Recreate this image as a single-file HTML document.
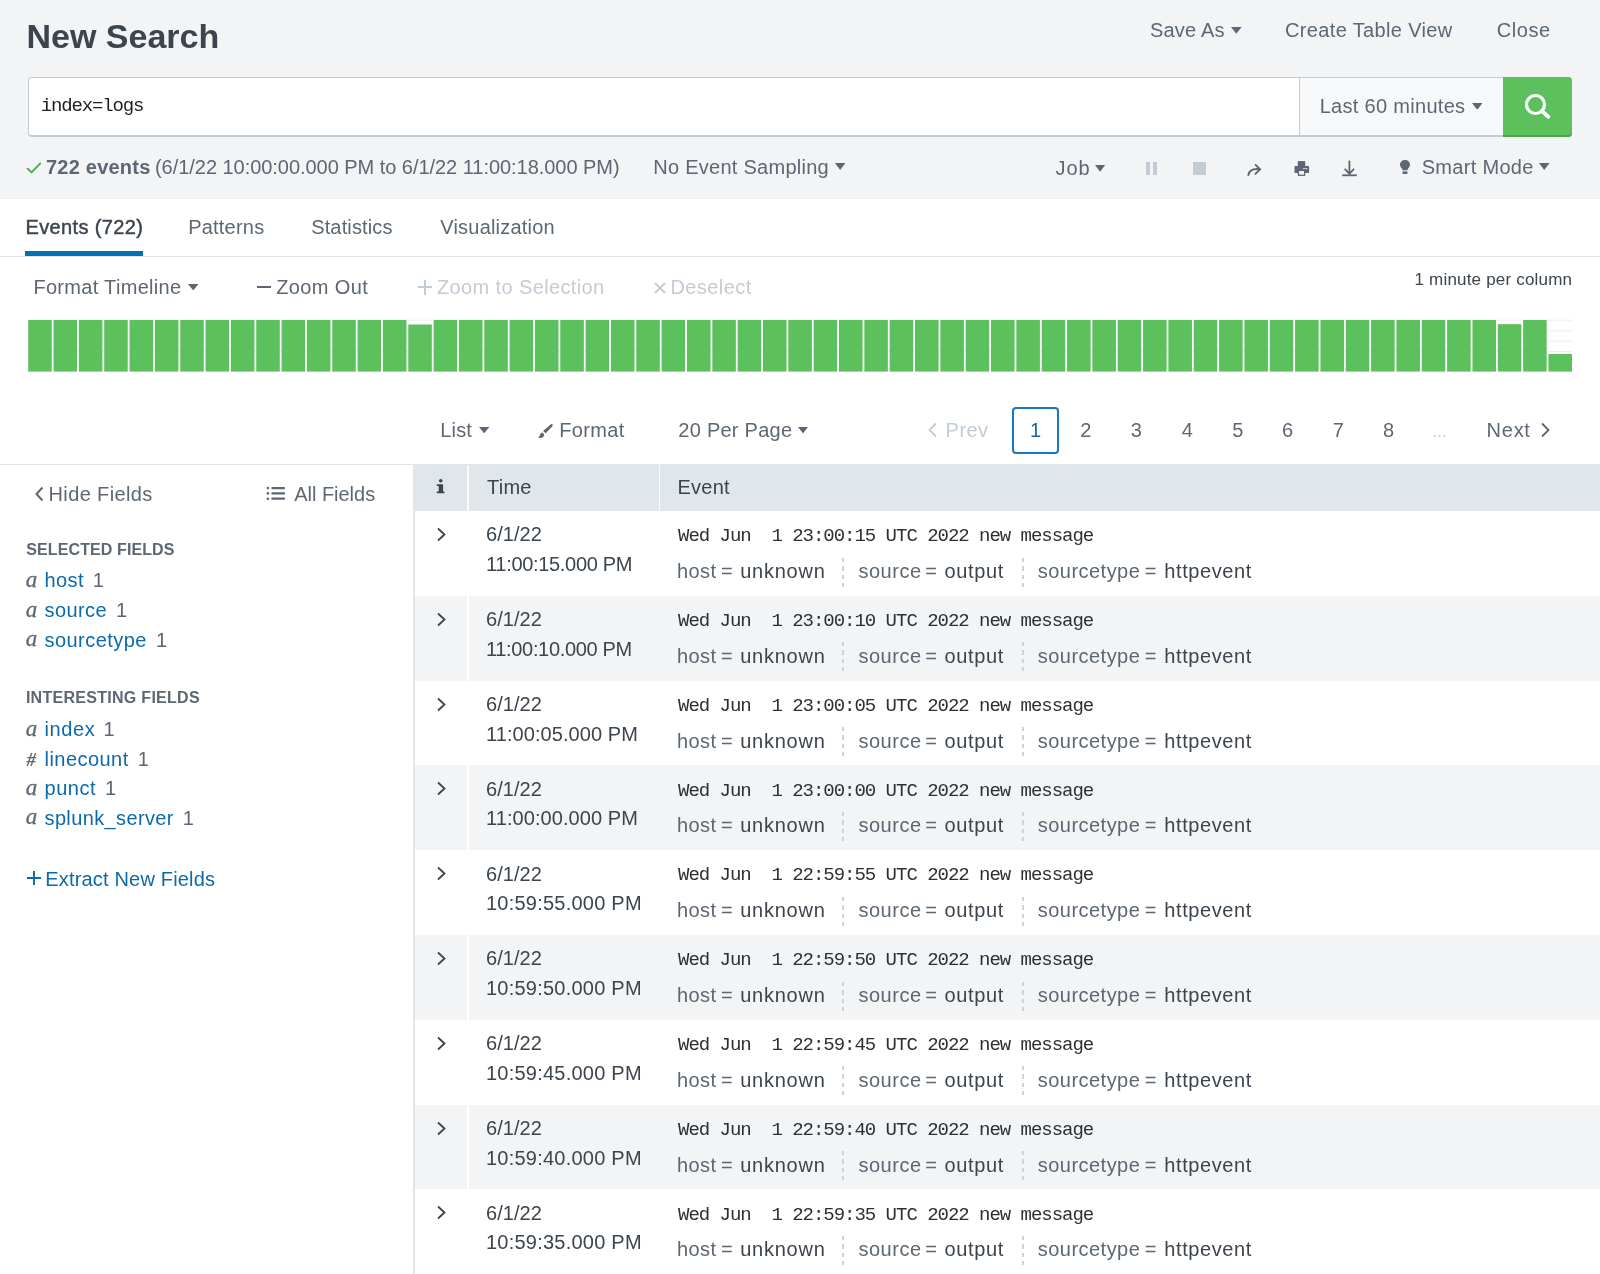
<!DOCTYPE html>
<html><head><meta charset="utf-8"><title>New Search</title>
<style>
html,body{margin:0;padding:0;}
body{width:1600px;height:1274px;position:relative;overflow:hidden;background:#fff;font-family:'Liberation Sans', sans-serif;}
.t{position:absolute;white-space:pre;}
#w{position:absolute;left:0;top:0;width:1600px;height:1274px;will-change:transform;}
.r{position:absolute;display:block;}
</style></head><body>
<div id="w">
<div class="r" style="left:0.00px;top:0.00px;width:1600.00px;height:198.50px;background:#f2f4f5;"></div>
<div class="r" style="left:0.00px;top:197.60px;width:1600.00px;height:1.00px;background:#eceef1;"></div>
<div class="t" style="left:26.50px;top:19.21px;font-size:34px;line-height:34px;color:#3c444d;font-weight:700;font-family:'Liberation Sans', sans-serif;">New Search</div>
<div class="t" style="left:1150.00px;top:20.37px;font-size:20px;line-height:20px;color:#5c6773;font-weight:400;font-family:'Liberation Sans', sans-serif;letter-spacing:0.200px;">Save As</div>
<svg class="r" style="left:1231.00px;top:27.20px" width="10.60" height="6.70" viewBox="0 0 10.60 6.70"><path d="M0 0H10.60L5.30 6.70Z" fill="#5c6773"/></svg>
<div class="t" style="left:1285.00px;top:20.37px;font-size:20px;line-height:20px;color:#5c6773;font-weight:400;font-family:'Liberation Sans', sans-serif;letter-spacing:0.350px;">Create Table View</div>
<div class="t" style="left:1496.80px;top:20.37px;font-size:20px;line-height:20px;color:#5c6773;font-weight:400;font-family:'Liberation Sans', sans-serif;letter-spacing:0.550px;">Close</div>
<div class="r" style="left:27.5px;top:77px;width:1544.5px;height:59.5px;border-radius:4px;background:#fff;box-sizing:border-box;border:1px solid #c3cbd4;border-bottom:2px solid #c3cbd4;"></div>
<div class="t" style="left:40.70px;top:97.14px;font-size:19px;line-height:19px;color:#1b1f23;font-weight:400;font-family:'Liberation Mono', monospace;letter-spacing:-1.133px;">index=logs</div>
<div class="r" style="left:1299.00px;top:77.00px;width:204.30px;height:59.50px;background:#f7f8fa;border-left:1px solid #c3cbd4;border-top:1px solid #c3cbd4;border-bottom:2px solid #c3cbd4;box-sizing:border-box;"></div>
<div class="t" style="left:1319.70px;top:96.07px;font-size:20px;line-height:20px;color:#5c6773;font-weight:400;font-family:'Liberation Sans', sans-serif;letter-spacing:0.300px;">Last 60 minutes</div>
<svg class="r" style="left:1472.20px;top:102.60px" width="10.50" height="6.90" viewBox="0 0 10.50 6.90"><path d="M0 0H10.50L5.25 6.90Z" fill="#5c6773"/></svg>
<div class="r" style="left:1503.3px;top:77px;width:68.7px;height:59.5px;background:#5cc05c;border-radius:0 4px 4px 0;box-shadow:inset 0 -2px 0 #4aa64a;"></div>
<svg class="r" style="left:1523px;top:92px" width="30" height="30" viewBox="0 0 30 30"><circle cx="12.5" cy="12.5" r="9" fill="none" stroke="#fff" stroke-width="3.2"/><path d="M19 19L25.3 24.8" stroke="#fff" stroke-width="3.9" stroke-linecap="round"/></svg>
<svg class="r" style="left:26px;top:160px" width="16" height="16" viewBox="0 0 16 16"><path d="M1.6 8.6L5.6 12.3L14.3 3.4" fill="none" stroke="#47a447" stroke-width="1.8" stroke-linecap="round"/></svg>
<div class="t" style="left:46.00px;top:156.67px;font-size:20px;line-height:20px;color:#5c6773;font-weight:700;font-family:'Liberation Sans', sans-serif;letter-spacing:0.222px;">722 events</div>
<div class="t" style="left:155.00px;top:156.67px;font-size:20px;line-height:20px;color:#5c6773;font-weight:400;font-family:'Liberation Sans', sans-serif;letter-spacing:-0.041px;">(6/1/22 10:00:00.000 PM to 6/1/22 11:00:18.000 PM)</div>
<div class="t" style="left:653.30px;top:156.67px;font-size:20px;line-height:20px;color:#5c6773;font-weight:400;font-family:'Liberation Sans', sans-serif;letter-spacing:0.263px;">No Event Sampling</div>
<svg class="r" style="left:834.70px;top:163.30px" width="10.30" height="6.90" viewBox="0 0 10.30 6.90"><path d="M0 0H10.30L5.15 6.90Z" fill="#5c6773"/></svg>
<div class="t" style="left:1055.60px;top:158.07px;font-size:20px;line-height:20px;color:#5c6773;font-weight:400;font-family:'Liberation Sans', sans-serif;letter-spacing:0.900px;">Job</div>
<svg class="r" style="left:1095.40px;top:164.90px" width="10.20" height="6.70" viewBox="0 0 10.20 6.70"><path d="M0 0H10.20L5.10 6.70Z" fill="#5c6773"/></svg>
<div class="r" style="left:1146.00px;top:162.00px;width:4.20px;height:12.60px;background:#c3cbd4;"></div>
<div class="r" style="left:1153.20px;top:162.00px;width:4.20px;height:12.60px;background:#c3cbd4;"></div>
<div class="r" style="left:1192.60px;top:162.00px;width:13.20px;height:12.60px;background:#c3cbd4;"></div>
<svg class="r" style="left:1240px;top:155px" width="125" height="27" viewBox="0 0 125 27"><path d="M8.3 20C9.3 15.2 13 13.4 19.6 14.2" fill="none" stroke="#5c6773" stroke-width="1.9" stroke-linecap="round"/><path d="M15.6 9.9L20 14.2L15.4 18.8" fill="none" stroke="#5c6773" stroke-width="1.9" stroke-linecap="round"/><rect x="57.8" y="6.1" width="7.4" height="5" fill="#5c6773"/><rect x="54.5" y="11.1" width="14.6" height="7" rx="0.8" fill="#5c6773"/><rect x="57.8" y="14.8" width="7.4" height="6.1" fill="#5c6773"/><rect x="59.1" y="16" width="4.9" height="3.6" fill="#f2f4f5"/><rect x="63.3" y="13" width="1.5" height="1.2" fill="#f2f4f5"/><rect x="65.7" y="13" width="1.5" height="1.2" fill="#f2f4f5"/><path d="M109.4 6.3V18.6" stroke="#5c6773" stroke-width="1.8" stroke-linecap="round"/><path d="M105.2 14.3L109.4 18.6L113.6 14.3" fill="none" stroke="#5c6773" stroke-width="1.8" stroke-linecap="round"/><path d="M102.2 20.3H116.8" stroke="#5c6773" stroke-width="1.8"/></svg>
<svg class="r" style="left:1400.2px;top:159.7px" width="10" height="14.2" viewBox="0 0 10 14.2"><path d="M5 0C2.2 0 0 2.1 0 4.8C0 6.8 1.3 8 2.4 9.2V10.2H7.6V9.2C8.7 8 10 6.8 10 4.8C10 2.1 7.8 0 5 0Z" fill="#5c6773"/><rect x="2.6" y="11.4" width="4.8" height="2.6" fill="#5c6773"/></svg>
<div class="t" style="left:1421.70px;top:156.67px;font-size:20px;line-height:20px;color:#5c6773;font-weight:400;font-family:'Liberation Sans', sans-serif;letter-spacing:0.311px;">Smart Mode</div>
<svg class="r" style="left:1539.20px;top:163.30px" width="10.50" height="6.90" viewBox="0 0 10.50 6.90"><path d="M0 0H10.50L5.25 6.90Z" fill="#5c6773"/></svg>
<div class="t" style="left:25.50px;top:216.57px;font-size:20px;line-height:20px;color:#3c444d;font-weight:400;font-family:'Liberation Sans', sans-serif;letter-spacing:0.364px;-webkit-text-stroke:0.45px #3c444d;">Events (722)</div>
<div class="r" style="left:25.00px;top:251.00px;width:118.00px;height:4.50px;background:#0071b5;"></div>
<div class="t" style="left:188.20px;top:216.57px;font-size:20px;line-height:20px;color:#5c6773;font-weight:400;font-family:'Liberation Sans', sans-serif;letter-spacing:0.214px;">Patterns</div>
<div class="t" style="left:311.20px;top:216.57px;font-size:20px;line-height:20px;color:#5c6773;font-weight:400;font-family:'Liberation Sans', sans-serif;letter-spacing:0.144px;">Statistics</div>
<div class="t" style="left:440.30px;top:216.57px;font-size:20px;line-height:20px;color:#5c6773;font-weight:400;font-family:'Liberation Sans', sans-serif;letter-spacing:0.200px;">Visualization</div>
<div class="r" style="left:0.00px;top:255.50px;width:1600.00px;height:1.50px;background:#e1e6eb;"></div>
<div class="t" style="left:33.40px;top:277.27px;font-size:20px;line-height:20px;color:#5c6773;font-weight:400;font-family:'Liberation Sans', sans-serif;letter-spacing:0.314px;">Format Timeline</div>
<svg class="r" style="left:187.50px;top:283.80px" width="10.50" height="6.50" viewBox="0 0 10.50 6.50"><path d="M0 0H10.50L5.25 6.50Z" fill="#5c6773"/></svg>
<div class="r" style="left:257.00px;top:286.30px;width:14.00px;height:2.00px;background:#5c6773;"></div>
<div class="t" style="left:276.20px;top:277.27px;font-size:20px;line-height:20px;color:#5c6773;font-weight:400;font-family:'Liberation Sans', sans-serif;letter-spacing:0.400px;">Zoom Out</div>
<div class="r" style="left:417.80px;top:286.30px;width:14.70px;height:2.00px;background:#c3cbd4;"></div>
<div class="r" style="left:424.15px;top:280.00px;width:2.00px;height:14.60px;background:#c3cbd4;"></div>
<div class="t" style="left:437.00px;top:277.27px;font-size:20px;line-height:20px;color:#c3cbd4;font-weight:400;font-family:'Liberation Sans', sans-serif;letter-spacing:0.375px;">Zoom to Selection</div>
<svg class="r" style="left:654px;top:281.5px" width="12" height="12" viewBox="0 0 12 12"><path d="M1 1L11 11M11 1L1 11" stroke="#c3cbd4" stroke-width="1.9"/></svg>
<div class="t" style="left:670.40px;top:277.27px;font-size:20px;line-height:20px;color:#c3cbd4;font-weight:400;font-family:'Liberation Sans', sans-serif;letter-spacing:0.443px;">Deselect</div>
<div class="t" style="left:1414.50px;top:270.61px;font-size:17px;line-height:17px;color:#3c444d;font-weight:400;font-family:'Liberation Sans', sans-serif;letter-spacing:0.194px;">1 minute per column</div>
<svg class="r" style="left:0px;top:310px" width="1600" height="70" viewBox="0 310 1600 70"><rect x="28.2" y="319.7" width="1543.8" height="1" fill="#eeeeee"/><rect x="28.2" y="330.3" width="1543.8" height="1" fill="#eeeeee"/><rect x="28.2" y="340.7" width="1543.8" height="1" fill="#eeeeee"/><rect x="28.2" y="351.0" width="1543.8" height="1" fill="#eeeeee"/><rect x="28.2" y="361.3" width="1543.8" height="1" fill="#eeeeee"/><rect x="28.20" y="320" width="23.54" height="51.60" fill="#5cc05c"/><rect x="53.54" y="320" width="23.54" height="51.60" fill="#5cc05c"/><rect x="78.88" y="320" width="23.54" height="51.60" fill="#5cc05c"/><rect x="104.21" y="320" width="23.54" height="51.60" fill="#5cc05c"/><rect x="129.55" y="320" width="23.54" height="51.60" fill="#5cc05c"/><rect x="154.89" y="320" width="23.54" height="51.60" fill="#5cc05c"/><rect x="180.23" y="320" width="23.54" height="51.60" fill="#5cc05c"/><rect x="205.56" y="320" width="23.54" height="51.60" fill="#5cc05c"/><rect x="230.90" y="320" width="23.54" height="51.60" fill="#5cc05c"/><rect x="256.24" y="320" width="23.54" height="51.60" fill="#5cc05c"/><rect x="281.58" y="320" width="23.54" height="51.60" fill="#5cc05c"/><rect x="306.91" y="320" width="23.54" height="51.60" fill="#5cc05c"/><rect x="332.25" y="320" width="23.54" height="51.60" fill="#5cc05c"/><rect x="357.59" y="320" width="23.54" height="51.60" fill="#5cc05c"/><rect x="382.93" y="320" width="23.54" height="51.60" fill="#5cc05c"/><rect x="408.27" y="324.5" width="23.54" height="47.10" fill="#5cc05c"/><rect x="433.60" y="320" width="23.54" height="51.60" fill="#5cc05c"/><rect x="458.94" y="320" width="23.54" height="51.60" fill="#5cc05c"/><rect x="484.28" y="320" width="23.54" height="51.60" fill="#5cc05c"/><rect x="509.62" y="320" width="23.54" height="51.60" fill="#5cc05c"/><rect x="534.95" y="320" width="23.54" height="51.60" fill="#5cc05c"/><rect x="560.29" y="320" width="23.54" height="51.60" fill="#5cc05c"/><rect x="585.63" y="320" width="23.54" height="51.60" fill="#5cc05c"/><rect x="610.97" y="320" width="23.54" height="51.60" fill="#5cc05c"/><rect x="636.30" y="320" width="23.54" height="51.60" fill="#5cc05c"/><rect x="661.64" y="320" width="23.54" height="51.60" fill="#5cc05c"/><rect x="686.98" y="320" width="23.54" height="51.60" fill="#5cc05c"/><rect x="712.32" y="320" width="23.54" height="51.60" fill="#5cc05c"/><rect x="737.66" y="320" width="23.54" height="51.60" fill="#5cc05c"/><rect x="762.99" y="320" width="23.54" height="51.60" fill="#5cc05c"/><rect x="788.33" y="320" width="23.54" height="51.60" fill="#5cc05c"/><rect x="813.67" y="320" width="23.54" height="51.60" fill="#5cc05c"/><rect x="839.01" y="320" width="23.54" height="51.60" fill="#5cc05c"/><rect x="864.34" y="320" width="23.54" height="51.60" fill="#5cc05c"/><rect x="889.68" y="320" width="23.54" height="51.60" fill="#5cc05c"/><rect x="915.02" y="320" width="23.54" height="51.60" fill="#5cc05c"/><rect x="940.36" y="320" width="23.54" height="51.60" fill="#5cc05c"/><rect x="965.70" y="320" width="23.54" height="51.60" fill="#5cc05c"/><rect x="991.03" y="320" width="23.54" height="51.60" fill="#5cc05c"/><rect x="1016.37" y="320" width="23.54" height="51.60" fill="#5cc05c"/><rect x="1041.71" y="320" width="23.54" height="51.60" fill="#5cc05c"/><rect x="1067.05" y="320" width="23.54" height="51.60" fill="#5cc05c"/><rect x="1092.38" y="320" width="23.54" height="51.60" fill="#5cc05c"/><rect x="1117.72" y="320" width="23.54" height="51.60" fill="#5cc05c"/><rect x="1143.06" y="320" width="23.54" height="51.60" fill="#5cc05c"/><rect x="1168.40" y="320" width="23.54" height="51.60" fill="#5cc05c"/><rect x="1193.73" y="320" width="23.54" height="51.60" fill="#5cc05c"/><rect x="1219.07" y="320" width="23.54" height="51.60" fill="#5cc05c"/><rect x="1244.41" y="320" width="23.54" height="51.60" fill="#5cc05c"/><rect x="1269.75" y="320" width="23.54" height="51.60" fill="#5cc05c"/><rect x="1295.09" y="320" width="23.54" height="51.60" fill="#5cc05c"/><rect x="1320.42" y="320" width="23.54" height="51.60" fill="#5cc05c"/><rect x="1345.76" y="320" width="23.54" height="51.60" fill="#5cc05c"/><rect x="1371.10" y="320" width="23.54" height="51.60" fill="#5cc05c"/><rect x="1396.44" y="320" width="23.54" height="51.60" fill="#5cc05c"/><rect x="1421.77" y="320" width="23.54" height="51.60" fill="#5cc05c"/><rect x="1447.11" y="320" width="23.54" height="51.60" fill="#5cc05c"/><rect x="1472.45" y="320" width="23.54" height="51.60" fill="#5cc05c"/><rect x="1497.79" y="324.2" width="23.54" height="47.40" fill="#5cc05c"/><rect x="1523.12" y="320" width="23.54" height="51.60" fill="#5cc05c"/><rect x="1548.46" y="354" width="23.54" height="17.60" fill="#5cc05c"/></svg>
<div class="t" style="left:440.30px;top:419.87px;font-size:20px;line-height:20px;color:#5c6773;font-weight:400;font-family:'Liberation Sans', sans-serif;letter-spacing:0.133px;">List</div>
<svg class="r" style="left:478.50px;top:427.00px" width="10.30" height="6.40" viewBox="0 0 10.30 6.40"><path d="M0 0H10.30L5.15 6.40Z" fill="#5c6773"/></svg>
<svg class="r" style="left:530px;top:415px" width="40" height="30" viewBox="0 0 40 30"><path d="M20.6 9.6Q22.2 8.4 22.7 9.6Q23 10.4 22.2 11.4L15.6 18.2L13.1 15.9Z" fill="#5c6773"/><path d="M12.4 17.6L14.3 19.5Q14.2 22.2 11.6 22.7Q10 23 8.4 22.9Q9.6 21.6 10.2 19.6Q10.9 17.6 12.4 17.6Z" fill="#5c6773"/></svg>
<div class="t" style="left:559.20px;top:419.87px;font-size:20px;line-height:20px;color:#5c6773;font-weight:400;font-family:'Liberation Sans', sans-serif;letter-spacing:0.360px;">Format</div>
<div class="t" style="left:678.30px;top:419.87px;font-size:20px;line-height:20px;color:#5c6773;font-weight:400;font-family:'Liberation Sans', sans-serif;letter-spacing:0.260px;">20 Per Page</div>
<svg class="r" style="left:798.00px;top:427.00px" width="10.00" height="6.40" viewBox="0 0 10.00 6.40"><path d="M0 0H10.00L5.00 6.40Z" fill="#5c6773"/></svg>
<svg class="r" style="left:927px;top:422px" width="11" height="16" viewBox="0 0 11 16"><path d="M9 1.5L2.5 8L9 14.5" fill="none" stroke="#c3cbd4" stroke-width="1.8"/></svg>
<div class="t" style="left:945.60px;top:419.97px;font-size:20px;line-height:20px;color:#c3cbd4;font-weight:400;font-family:'Liberation Sans', sans-serif;letter-spacing:0.467px;">Prev</div>
<div class="r" style="left:1011.8px;top:407.2px;width:47.6px;height:47.2px;box-sizing:border-box;border:2px solid #1a78c2;border-radius:4px;"></div>
<div class="t" style="left:1015.50px;width:40px;text-align:center;top:419.97px;font-size:20px;line-height:20px;color:#0a6aac;font-family:'Liberation Sans', sans-serif">1</div>
<div class="t" style="left:1065.70px;width:40px;text-align:center;top:419.97px;font-size:20px;line-height:20px;color:#5c6773;font-family:'Liberation Sans', sans-serif">2</div>
<div class="t" style="left:1116.40px;width:40px;text-align:center;top:419.97px;font-size:20px;line-height:20px;color:#5c6773;font-family:'Liberation Sans', sans-serif">3</div>
<div class="t" style="left:1167.30px;width:40px;text-align:center;top:419.97px;font-size:20px;line-height:20px;color:#5c6773;font-family:'Liberation Sans', sans-serif">4</div>
<div class="t" style="left:1217.80px;width:40px;text-align:center;top:419.97px;font-size:20px;line-height:20px;color:#5c6773;font-family:'Liberation Sans', sans-serif">5</div>
<div class="t" style="left:1267.60px;width:40px;text-align:center;top:419.97px;font-size:20px;line-height:20px;color:#5c6773;font-family:'Liberation Sans', sans-serif">6</div>
<div class="t" style="left:1318.20px;width:40px;text-align:center;top:419.97px;font-size:20px;line-height:20px;color:#5c6773;font-family:'Liberation Sans', sans-serif">7</div>
<div class="t" style="left:1368.60px;width:40px;text-align:center;top:419.97px;font-size:20px;line-height:20px;color:#5c6773;font-family:'Liberation Sans', sans-serif">8</div>
<div class="t" style="left:1419.60px;width:40px;text-align:center;top:423.11px;font-size:17px;line-height:17px;color:#c3cbd4;font-family:'Liberation Sans', sans-serif">...</div>
<div class="t" style="left:1486.60px;top:419.97px;font-size:20px;line-height:20px;color:#5c6773;font-weight:400;font-family:'Liberation Sans', sans-serif;letter-spacing:0.733px;">Next</div>
<svg class="r" style="left:1539.5px;top:422px" width="11" height="16" viewBox="0 0 11 16"><path d="M2 1.5L8.5 8L2 14.5" fill="none" stroke="#5c6773" stroke-width="1.8"/></svg>
<div class="r" style="left:0.00px;top:463.50px;width:1600.00px;height:1.30px;background:#e1e6eb;"></div>
<div class="r" style="left:413.00px;top:464.00px;width:2.00px;height:810.00px;background:#e1e6eb;"></div>
<svg class="r" style="left:34px;top:486px" width="11" height="16" viewBox="0 0 11 16"><path d="M8.5 1.5L2.5 8L8.5 14.5" fill="none" stroke="#5c6773" stroke-width="2"/></svg>
<div class="t" style="left:48.50px;top:483.82px;font-size:20px;line-height:20px;color:#5c6773;font-weight:400;font-family:'Liberation Sans', sans-serif;letter-spacing:0.375px;">Hide Fields</div>
<svg class="r" style="left:260px;top:480px" width="30" height="25" viewBox="0 0 30 25"><g fill="#5c6773"><circle cx="7.9" cy="8.05" r="1.3"/><circle cx="7.9" cy="13.4" r="1.3"/><circle cx="7.9" cy="18.7" r="1.3"/></g><path d="M12.4 8.05H24M12.4 13.4H24M12.4 18.7H24" stroke="#5c6773" stroke-width="2.3" stroke-linecap="round"/></svg>
<div class="t" style="left:294.25px;top:483.82px;font-size:20px;line-height:20px;color:#5c6773;font-weight:400;font-family:'Liberation Sans', sans-serif;letter-spacing:-0.028px;">All Fields</div>
<div class="t" style="left:26.25px;top:541.85px;font-size:16px;line-height:16px;color:#5c6773;font-weight:700;font-family:'Liberation Sans', sans-serif;letter-spacing:0.107px;">SELECTED FIELDS</div>
<div class="t" style="left:25.80px;top:567.99px;font-size:23px;line-height:23px;color:#5c6773;font-weight:400;font-family:'Liberation Serif', serif;font-style:italic;-webkit-text-stroke:0.3px #5c6773;">a</div>
<div class="t" style="left:44.50px;top:570.32px;font-size:20px;line-height:20px;color:#0a6aac;font-weight:400;font-family:'Liberation Sans', sans-serif;letter-spacing:0.417px;">host</div>
<div class="t" style="left:92.75px;top:570.32px;font-size:20px;line-height:20px;color:#5c6773;font-weight:400;font-family:'Liberation Sans', sans-serif;">1</div>
<div class="t" style="left:25.80px;top:597.74px;font-size:23px;line-height:23px;color:#5c6773;font-weight:400;font-family:'Liberation Serif', serif;font-style:italic;-webkit-text-stroke:0.3px #5c6773;">a</div>
<div class="t" style="left:44.50px;top:600.07px;font-size:20px;line-height:20px;color:#0a6aac;font-weight:400;font-family:'Liberation Sans', sans-serif;letter-spacing:0.420px;">source</div>
<div class="t" style="left:115.90px;top:600.07px;font-size:20px;line-height:20px;color:#5c6773;font-weight:400;font-family:'Liberation Sans', sans-serif;">1</div>
<div class="t" style="left:25.80px;top:627.49px;font-size:23px;line-height:23px;color:#5c6773;font-weight:400;font-family:'Liberation Serif', serif;font-style:italic;-webkit-text-stroke:0.3px #5c6773;">a</div>
<div class="t" style="left:44.50px;top:629.82px;font-size:20px;line-height:20px;color:#0a6aac;font-weight:400;font-family:'Liberation Sans', sans-serif;letter-spacing:0.456px;">sourcetype</div>
<div class="t" style="left:155.90px;top:629.82px;font-size:20px;line-height:20px;color:#5c6773;font-weight:400;font-family:'Liberation Sans', sans-serif;">1</div>
<div class="t" style="left:25.90px;top:690.15px;font-size:16px;line-height:16px;color:#5c6773;font-weight:700;font-family:'Liberation Sans', sans-serif;letter-spacing:0.285px;">INTERESTING FIELDS</div>
<div class="t" style="left:25.80px;top:716.54px;font-size:23px;line-height:23px;color:#5c6773;font-weight:400;font-family:'Liberation Serif', serif;font-style:italic;-webkit-text-stroke:0.3px #5c6773;">a</div>
<div class="t" style="left:44.50px;top:718.87px;font-size:20px;line-height:20px;color:#0a6aac;font-weight:400;font-family:'Liberation Sans', sans-serif;letter-spacing:0.600px;">index</div>
<div class="t" style="left:103.60px;top:718.87px;font-size:20px;line-height:20px;color:#5c6773;font-weight:400;font-family:'Liberation Sans', sans-serif;">1</div>
<div class="t" style="left:26.50px;top:749.69px;font-size:19px;line-height:19px;color:#5c6773;font-weight:700;font-family:'Liberation Serif', serif;font-style:italic;">#</div>
<div class="t" style="left:44.50px;top:748.67px;font-size:20px;line-height:20px;color:#0a6aac;font-weight:400;font-family:'Liberation Sans', sans-serif;letter-spacing:0.462px;">linecount</div>
<div class="t" style="left:137.70px;top:748.67px;font-size:20px;line-height:20px;color:#5c6773;font-weight:400;font-family:'Liberation Sans', sans-serif;">1</div>
<div class="t" style="left:25.80px;top:775.84px;font-size:23px;line-height:23px;color:#5c6773;font-weight:400;font-family:'Liberation Serif', serif;font-style:italic;-webkit-text-stroke:0.3px #5c6773;">a</div>
<div class="t" style="left:44.50px;top:778.17px;font-size:20px;line-height:20px;color:#0a6aac;font-weight:400;font-family:'Liberation Sans', sans-serif;letter-spacing:0.525px;">punct</div>
<div class="t" style="left:105.00px;top:778.17px;font-size:20px;line-height:20px;color:#5c6773;font-weight:400;font-family:'Liberation Sans', sans-serif;">1</div>
<div class="t" style="left:25.80px;top:805.44px;font-size:23px;line-height:23px;color:#5c6773;font-weight:400;font-family:'Liberation Serif', serif;font-style:italic;-webkit-text-stroke:0.3px #5c6773;">a</div>
<div class="t" style="left:44.50px;top:807.77px;font-size:20px;line-height:20px;color:#0a6aac;font-weight:400;font-family:'Liberation Sans', sans-serif;letter-spacing:0.375px;">splunk_server</div>
<div class="t" style="left:182.70px;top:807.77px;font-size:20px;line-height:20px;color:#5c6773;font-weight:400;font-family:'Liberation Sans', sans-serif;">1</div>
<svg class="r" style="left:26.9px;top:871px" width="14" height="14" viewBox="0 0 14 14"><path d="M7 0V14M0 7H14" stroke="#0a6aac" stroke-width="1.9"/></svg>
<div class="t" style="left:45.30px;top:868.97px;font-size:20px;line-height:20px;color:#0a6aac;font-weight:400;font-family:'Liberation Sans', sans-serif;letter-spacing:0.176px;">Extract New Fields</div>
<div class="r" style="left:415.00px;top:464.80px;width:1185.00px;height:46.20px;background:#e1e6eb;"></div>
<div class="r" style="left:467.00px;top:464.80px;width:2.00px;height:46.20px;background:#f9fafb;"></div>
<div class="r" style="left:658.70px;top:464.80px;width:1.60px;height:46.20px;background:#f9fafb;"></div>
<svg class="r" style="left:430px;top:475px" width="20" height="22" viewBox="0 0 20 22"><circle cx="10.7" cy="5.8" r="1.8" fill="#3c444d"/><path d="M6.8 9.2H13.1V16.5H14.4V18.3H6.8V16.5H8.7V11H6.8Z" fill="#3c444d"/></svg>
<div class="t" style="left:487.00px;top:476.87px;font-size:20px;line-height:20px;color:#3c444d;font-weight:400;font-family:'Liberation Sans', sans-serif;letter-spacing:0.233px;">Time</div>
<div class="t" style="left:677.50px;top:476.87px;font-size:20px;line-height:20px;color:#3c444d;font-weight:400;font-family:'Liberation Sans', sans-serif;letter-spacing:0.225px;">Event</div>
<svg class="r" style="left:435.5px;top:527.00px" width="11" height="15" viewBox="0 0 11 15"><path d="M2 1.5L8.5 7.5L2 13.5" fill="none" stroke="#3c444d" stroke-width="1.8"/></svg>
<div class="t" style="left:486.00px;top:524.32px;font-size:20px;line-height:20px;color:#3c444d;font-weight:400;font-family:'Liberation Sans', sans-serif;letter-spacing:0.060px;">6/1/22</div>
<div class="t" style="left:486.00px;top:553.97px;font-size:20px;line-height:20px;color:#3c444d;font-weight:400;font-family:'Liberation Sans', sans-serif;letter-spacing:-0.314px;">11:00:15.000 PM</div>
<div class="t" style="left:678.00px;top:527.19px;font-size:19px;line-height:19px;color:#2b3033;font-weight:400;font-family:'Liberation Mono', monospace;letter-spacing:-1.021px;">Wed Jun  1 23:00:15 UTC 2022 new message</div>
<div class="t" style="left:677.00px;top:561.07px;font-size:20px;line-height:20px;color:#5c6773;font-weight:400;font-family:'Liberation Sans', sans-serif;letter-spacing:0.417px;">host</div>
<div class="t" style="left:721.00px;top:561.07px;font-size:20px;line-height:20px;color:#5c6773;font-weight:400;font-family:'Liberation Sans', sans-serif;">=</div>
<div class="t" style="left:740.25px;top:561.07px;font-size:20px;line-height:20px;color:#3c444d;font-weight:400;font-family:'Liberation Sans', sans-serif;letter-spacing:0.750px;">unknown</div>
<div class="r" style="left:842px;top:557.60px;width:2px;height:29.2px;background:repeating-linear-gradient(to bottom,#cdd3db 0,#cdd3db 4.2px,transparent 4.2px,transparent 8.33px);"></div>
<div class="t" style="left:858.50px;top:561.07px;font-size:20px;line-height:20px;color:#5c6773;font-weight:400;font-family:'Liberation Sans', sans-serif;letter-spacing:0.500px;">source</div>
<div class="t" style="left:925.25px;top:561.07px;font-size:20px;line-height:20px;color:#5c6773;font-weight:400;font-family:'Liberation Sans', sans-serif;">=</div>
<div class="t" style="left:944.50px;top:561.07px;font-size:20px;line-height:20px;color:#3c444d;font-weight:400;font-family:'Liberation Sans', sans-serif;letter-spacing:0.650px;">output</div>
<div class="r" style="left:1022px;top:557.60px;width:2px;height:29.2px;background:repeating-linear-gradient(to bottom,#cdd3db 0,#cdd3db 4.2px,transparent 4.2px,transparent 8.33px);"></div>
<div class="t" style="left:1037.75px;top:561.07px;font-size:20px;line-height:20px;color:#5c6773;font-weight:400;font-family:'Liberation Sans', sans-serif;letter-spacing:0.472px;">sourcetype</div>
<div class="t" style="left:1144.80px;top:561.07px;font-size:20px;line-height:20px;color:#5c6773;font-weight:400;font-family:'Liberation Sans', sans-serif;">=</div>
<div class="t" style="left:1164.30px;top:561.07px;font-size:20px;line-height:20px;color:#3c444d;font-weight:400;font-family:'Liberation Sans', sans-serif;letter-spacing:0.588px;">httpevent</div>
<div class="r" style="left:415.00px;top:595.80px;width:1185.00px;height:84.80px;background:#f2f4f5;"></div>
<div class="r" style="left:467.00px;top:595.80px;width:2.00px;height:84.80px;background:#ffffff;"></div>
<svg class="r" style="left:435.5px;top:611.80px" width="11" height="15" viewBox="0 0 11 15"><path d="M2 1.5L8.5 7.5L2 13.5" fill="none" stroke="#3c444d" stroke-width="1.8"/></svg>
<div class="t" style="left:486.00px;top:609.12px;font-size:20px;line-height:20px;color:#3c444d;font-weight:400;font-family:'Liberation Sans', sans-serif;letter-spacing:0.060px;">6/1/22</div>
<div class="t" style="left:486.00px;top:638.77px;font-size:20px;line-height:20px;color:#3c444d;font-weight:400;font-family:'Liberation Sans', sans-serif;letter-spacing:-0.336px;">11:00:10.000 PM</div>
<div class="t" style="left:678.00px;top:611.99px;font-size:19px;line-height:19px;color:#2b3033;font-weight:400;font-family:'Liberation Mono', monospace;letter-spacing:-1.021px;">Wed Jun  1 23:00:10 UTC 2022 new message</div>
<div class="t" style="left:677.00px;top:645.87px;font-size:20px;line-height:20px;color:#5c6773;font-weight:400;font-family:'Liberation Sans', sans-serif;letter-spacing:0.417px;">host</div>
<div class="t" style="left:721.00px;top:645.87px;font-size:20px;line-height:20px;color:#5c6773;font-weight:400;font-family:'Liberation Sans', sans-serif;">=</div>
<div class="t" style="left:740.25px;top:645.87px;font-size:20px;line-height:20px;color:#3c444d;font-weight:400;font-family:'Liberation Sans', sans-serif;letter-spacing:0.750px;">unknown</div>
<div class="r" style="left:842px;top:642.40px;width:2px;height:29.2px;background:repeating-linear-gradient(to bottom,#cdd3db 0,#cdd3db 4.2px,transparent 4.2px,transparent 8.33px);"></div>
<div class="t" style="left:858.50px;top:645.87px;font-size:20px;line-height:20px;color:#5c6773;font-weight:400;font-family:'Liberation Sans', sans-serif;letter-spacing:0.500px;">source</div>
<div class="t" style="left:925.25px;top:645.87px;font-size:20px;line-height:20px;color:#5c6773;font-weight:400;font-family:'Liberation Sans', sans-serif;">=</div>
<div class="t" style="left:944.50px;top:645.87px;font-size:20px;line-height:20px;color:#3c444d;font-weight:400;font-family:'Liberation Sans', sans-serif;letter-spacing:0.650px;">output</div>
<div class="r" style="left:1022px;top:642.40px;width:2px;height:29.2px;background:repeating-linear-gradient(to bottom,#cdd3db 0,#cdd3db 4.2px,transparent 4.2px,transparent 8.33px);"></div>
<div class="t" style="left:1037.75px;top:645.87px;font-size:20px;line-height:20px;color:#5c6773;font-weight:400;font-family:'Liberation Sans', sans-serif;letter-spacing:0.472px;">sourcetype</div>
<div class="t" style="left:1144.80px;top:645.87px;font-size:20px;line-height:20px;color:#5c6773;font-weight:400;font-family:'Liberation Sans', sans-serif;">=</div>
<div class="t" style="left:1164.30px;top:645.87px;font-size:20px;line-height:20px;color:#3c444d;font-weight:400;font-family:'Liberation Sans', sans-serif;letter-spacing:0.588px;">httpevent</div>
<svg class="r" style="left:435.5px;top:696.60px" width="11" height="15" viewBox="0 0 11 15"><path d="M2 1.5L8.5 7.5L2 13.5" fill="none" stroke="#3c444d" stroke-width="1.8"/></svg>
<div class="t" style="left:486.00px;top:693.92px;font-size:20px;line-height:20px;color:#3c444d;font-weight:400;font-family:'Liberation Sans', sans-serif;letter-spacing:0.060px;">6/1/22</div>
<div class="t" style="left:486.00px;top:723.57px;font-size:20px;line-height:20px;color:#3c444d;font-weight:400;font-family:'Liberation Sans', sans-serif;letter-spacing:0.071px;">11:00:05.000 PM</div>
<div class="t" style="left:678.00px;top:696.79px;font-size:19px;line-height:19px;color:#2b3033;font-weight:400;font-family:'Liberation Mono', monospace;letter-spacing:-1.021px;">Wed Jun  1 23:00:05 UTC 2022 new message</div>
<div class="t" style="left:677.00px;top:730.67px;font-size:20px;line-height:20px;color:#5c6773;font-weight:400;font-family:'Liberation Sans', sans-serif;letter-spacing:0.417px;">host</div>
<div class="t" style="left:721.00px;top:730.67px;font-size:20px;line-height:20px;color:#5c6773;font-weight:400;font-family:'Liberation Sans', sans-serif;">=</div>
<div class="t" style="left:740.25px;top:730.67px;font-size:20px;line-height:20px;color:#3c444d;font-weight:400;font-family:'Liberation Sans', sans-serif;letter-spacing:0.750px;">unknown</div>
<div class="r" style="left:842px;top:727.20px;width:2px;height:29.2px;background:repeating-linear-gradient(to bottom,#cdd3db 0,#cdd3db 4.2px,transparent 4.2px,transparent 8.33px);"></div>
<div class="t" style="left:858.50px;top:730.67px;font-size:20px;line-height:20px;color:#5c6773;font-weight:400;font-family:'Liberation Sans', sans-serif;letter-spacing:0.500px;">source</div>
<div class="t" style="left:925.25px;top:730.67px;font-size:20px;line-height:20px;color:#5c6773;font-weight:400;font-family:'Liberation Sans', sans-serif;">=</div>
<div class="t" style="left:944.50px;top:730.67px;font-size:20px;line-height:20px;color:#3c444d;font-weight:400;font-family:'Liberation Sans', sans-serif;letter-spacing:0.650px;">output</div>
<div class="r" style="left:1022px;top:727.20px;width:2px;height:29.2px;background:repeating-linear-gradient(to bottom,#cdd3db 0,#cdd3db 4.2px,transparent 4.2px,transparent 8.33px);"></div>
<div class="t" style="left:1037.75px;top:730.67px;font-size:20px;line-height:20px;color:#5c6773;font-weight:400;font-family:'Liberation Sans', sans-serif;letter-spacing:0.472px;">sourcetype</div>
<div class="t" style="left:1144.80px;top:730.67px;font-size:20px;line-height:20px;color:#5c6773;font-weight:400;font-family:'Liberation Sans', sans-serif;">=</div>
<div class="t" style="left:1164.30px;top:730.67px;font-size:20px;line-height:20px;color:#3c444d;font-weight:400;font-family:'Liberation Sans', sans-serif;letter-spacing:0.588px;">httpevent</div>
<div class="r" style="left:415.00px;top:765.40px;width:1185.00px;height:84.80px;background:#f2f4f5;"></div>
<div class="r" style="left:467.00px;top:765.40px;width:2.00px;height:84.80px;background:#ffffff;"></div>
<svg class="r" style="left:435.5px;top:781.40px" width="11" height="15" viewBox="0 0 11 15"><path d="M2 1.5L8.5 7.5L2 13.5" fill="none" stroke="#3c444d" stroke-width="1.8"/></svg>
<div class="t" style="left:486.00px;top:778.72px;font-size:20px;line-height:20px;color:#3c444d;font-weight:400;font-family:'Liberation Sans', sans-serif;letter-spacing:0.060px;">6/1/22</div>
<div class="t" style="left:486.00px;top:808.37px;font-size:20px;line-height:20px;color:#3c444d;font-weight:400;font-family:'Liberation Sans', sans-serif;letter-spacing:0.071px;">11:00:00.000 PM</div>
<div class="t" style="left:678.00px;top:781.59px;font-size:19px;line-height:19px;color:#2b3033;font-weight:400;font-family:'Liberation Mono', monospace;letter-spacing:-1.021px;">Wed Jun  1 23:00:00 UTC 2022 new message</div>
<div class="t" style="left:677.00px;top:815.47px;font-size:20px;line-height:20px;color:#5c6773;font-weight:400;font-family:'Liberation Sans', sans-serif;letter-spacing:0.417px;">host</div>
<div class="t" style="left:721.00px;top:815.47px;font-size:20px;line-height:20px;color:#5c6773;font-weight:400;font-family:'Liberation Sans', sans-serif;">=</div>
<div class="t" style="left:740.25px;top:815.47px;font-size:20px;line-height:20px;color:#3c444d;font-weight:400;font-family:'Liberation Sans', sans-serif;letter-spacing:0.750px;">unknown</div>
<div class="r" style="left:842px;top:812.00px;width:2px;height:29.2px;background:repeating-linear-gradient(to bottom,#cdd3db 0,#cdd3db 4.2px,transparent 4.2px,transparent 8.33px);"></div>
<div class="t" style="left:858.50px;top:815.47px;font-size:20px;line-height:20px;color:#5c6773;font-weight:400;font-family:'Liberation Sans', sans-serif;letter-spacing:0.500px;">source</div>
<div class="t" style="left:925.25px;top:815.47px;font-size:20px;line-height:20px;color:#5c6773;font-weight:400;font-family:'Liberation Sans', sans-serif;">=</div>
<div class="t" style="left:944.50px;top:815.47px;font-size:20px;line-height:20px;color:#3c444d;font-weight:400;font-family:'Liberation Sans', sans-serif;letter-spacing:0.650px;">output</div>
<div class="r" style="left:1022px;top:812.00px;width:2px;height:29.2px;background:repeating-linear-gradient(to bottom,#cdd3db 0,#cdd3db 4.2px,transparent 4.2px,transparent 8.33px);"></div>
<div class="t" style="left:1037.75px;top:815.47px;font-size:20px;line-height:20px;color:#5c6773;font-weight:400;font-family:'Liberation Sans', sans-serif;letter-spacing:0.472px;">sourcetype</div>
<div class="t" style="left:1144.80px;top:815.47px;font-size:20px;line-height:20px;color:#5c6773;font-weight:400;font-family:'Liberation Sans', sans-serif;">=</div>
<div class="t" style="left:1164.30px;top:815.47px;font-size:20px;line-height:20px;color:#3c444d;font-weight:400;font-family:'Liberation Sans', sans-serif;letter-spacing:0.588px;">httpevent</div>
<svg class="r" style="left:435.5px;top:866.20px" width="11" height="15" viewBox="0 0 11 15"><path d="M2 1.5L8.5 7.5L2 13.5" fill="none" stroke="#3c444d" stroke-width="1.8"/></svg>
<div class="t" style="left:486.00px;top:863.52px;font-size:20px;line-height:20px;color:#3c444d;font-weight:400;font-family:'Liberation Sans', sans-serif;letter-spacing:0.060px;">6/1/22</div>
<div class="t" style="left:486.00px;top:893.17px;font-size:20px;line-height:20px;color:#3c444d;font-weight:400;font-family:'Liberation Sans', sans-serif;letter-spacing:0.232px;">10:59:55.000 PM</div>
<div class="t" style="left:678.00px;top:866.39px;font-size:19px;line-height:19px;color:#2b3033;font-weight:400;font-family:'Liberation Mono', monospace;letter-spacing:-1.021px;">Wed Jun  1 22:59:55 UTC 2022 new message</div>
<div class="t" style="left:677.00px;top:900.27px;font-size:20px;line-height:20px;color:#5c6773;font-weight:400;font-family:'Liberation Sans', sans-serif;letter-spacing:0.417px;">host</div>
<div class="t" style="left:721.00px;top:900.27px;font-size:20px;line-height:20px;color:#5c6773;font-weight:400;font-family:'Liberation Sans', sans-serif;">=</div>
<div class="t" style="left:740.25px;top:900.27px;font-size:20px;line-height:20px;color:#3c444d;font-weight:400;font-family:'Liberation Sans', sans-serif;letter-spacing:0.750px;">unknown</div>
<div class="r" style="left:842px;top:896.80px;width:2px;height:29.2px;background:repeating-linear-gradient(to bottom,#cdd3db 0,#cdd3db 4.2px,transparent 4.2px,transparent 8.33px);"></div>
<div class="t" style="left:858.50px;top:900.27px;font-size:20px;line-height:20px;color:#5c6773;font-weight:400;font-family:'Liberation Sans', sans-serif;letter-spacing:0.500px;">source</div>
<div class="t" style="left:925.25px;top:900.27px;font-size:20px;line-height:20px;color:#5c6773;font-weight:400;font-family:'Liberation Sans', sans-serif;">=</div>
<div class="t" style="left:944.50px;top:900.27px;font-size:20px;line-height:20px;color:#3c444d;font-weight:400;font-family:'Liberation Sans', sans-serif;letter-spacing:0.650px;">output</div>
<div class="r" style="left:1022px;top:896.80px;width:2px;height:29.2px;background:repeating-linear-gradient(to bottom,#cdd3db 0,#cdd3db 4.2px,transparent 4.2px,transparent 8.33px);"></div>
<div class="t" style="left:1037.75px;top:900.27px;font-size:20px;line-height:20px;color:#5c6773;font-weight:400;font-family:'Liberation Sans', sans-serif;letter-spacing:0.472px;">sourcetype</div>
<div class="t" style="left:1144.80px;top:900.27px;font-size:20px;line-height:20px;color:#5c6773;font-weight:400;font-family:'Liberation Sans', sans-serif;">=</div>
<div class="t" style="left:1164.30px;top:900.27px;font-size:20px;line-height:20px;color:#3c444d;font-weight:400;font-family:'Liberation Sans', sans-serif;letter-spacing:0.588px;">httpevent</div>
<div class="r" style="left:415.00px;top:935.00px;width:1185.00px;height:84.80px;background:#f2f4f5;"></div>
<div class="r" style="left:467.00px;top:935.00px;width:2.00px;height:84.80px;background:#ffffff;"></div>
<svg class="r" style="left:435.5px;top:951.00px" width="11" height="15" viewBox="0 0 11 15"><path d="M2 1.5L8.5 7.5L2 13.5" fill="none" stroke="#3c444d" stroke-width="1.8"/></svg>
<div class="t" style="left:486.00px;top:948.32px;font-size:20px;line-height:20px;color:#3c444d;font-weight:400;font-family:'Liberation Sans', sans-serif;letter-spacing:0.060px;">6/1/22</div>
<div class="t" style="left:486.00px;top:977.97px;font-size:20px;line-height:20px;color:#3c444d;font-weight:400;font-family:'Liberation Sans', sans-serif;letter-spacing:0.232px;">10:59:50.000 PM</div>
<div class="t" style="left:678.00px;top:951.19px;font-size:19px;line-height:19px;color:#2b3033;font-weight:400;font-family:'Liberation Mono', monospace;letter-spacing:-1.021px;">Wed Jun  1 22:59:50 UTC 2022 new message</div>
<div class="t" style="left:677.00px;top:985.07px;font-size:20px;line-height:20px;color:#5c6773;font-weight:400;font-family:'Liberation Sans', sans-serif;letter-spacing:0.417px;">host</div>
<div class="t" style="left:721.00px;top:985.07px;font-size:20px;line-height:20px;color:#5c6773;font-weight:400;font-family:'Liberation Sans', sans-serif;">=</div>
<div class="t" style="left:740.25px;top:985.07px;font-size:20px;line-height:20px;color:#3c444d;font-weight:400;font-family:'Liberation Sans', sans-serif;letter-spacing:0.750px;">unknown</div>
<div class="r" style="left:842px;top:981.60px;width:2px;height:29.2px;background:repeating-linear-gradient(to bottom,#cdd3db 0,#cdd3db 4.2px,transparent 4.2px,transparent 8.33px);"></div>
<div class="t" style="left:858.50px;top:985.07px;font-size:20px;line-height:20px;color:#5c6773;font-weight:400;font-family:'Liberation Sans', sans-serif;letter-spacing:0.500px;">source</div>
<div class="t" style="left:925.25px;top:985.07px;font-size:20px;line-height:20px;color:#5c6773;font-weight:400;font-family:'Liberation Sans', sans-serif;">=</div>
<div class="t" style="left:944.50px;top:985.07px;font-size:20px;line-height:20px;color:#3c444d;font-weight:400;font-family:'Liberation Sans', sans-serif;letter-spacing:0.650px;">output</div>
<div class="r" style="left:1022px;top:981.60px;width:2px;height:29.2px;background:repeating-linear-gradient(to bottom,#cdd3db 0,#cdd3db 4.2px,transparent 4.2px,transparent 8.33px);"></div>
<div class="t" style="left:1037.75px;top:985.07px;font-size:20px;line-height:20px;color:#5c6773;font-weight:400;font-family:'Liberation Sans', sans-serif;letter-spacing:0.472px;">sourcetype</div>
<div class="t" style="left:1144.80px;top:985.07px;font-size:20px;line-height:20px;color:#5c6773;font-weight:400;font-family:'Liberation Sans', sans-serif;">=</div>
<div class="t" style="left:1164.30px;top:985.07px;font-size:20px;line-height:20px;color:#3c444d;font-weight:400;font-family:'Liberation Sans', sans-serif;letter-spacing:0.588px;">httpevent</div>
<svg class="r" style="left:435.5px;top:1035.80px" width="11" height="15" viewBox="0 0 11 15"><path d="M2 1.5L8.5 7.5L2 13.5" fill="none" stroke="#3c444d" stroke-width="1.8"/></svg>
<div class="t" style="left:486.00px;top:1033.12px;font-size:20px;line-height:20px;color:#3c444d;font-weight:400;font-family:'Liberation Sans', sans-serif;letter-spacing:0.060px;">6/1/22</div>
<div class="t" style="left:486.00px;top:1062.77px;font-size:20px;line-height:20px;color:#3c444d;font-weight:400;font-family:'Liberation Sans', sans-serif;letter-spacing:0.232px;">10:59:45.000 PM</div>
<div class="t" style="left:678.00px;top:1035.99px;font-size:19px;line-height:19px;color:#2b3033;font-weight:400;font-family:'Liberation Mono', monospace;letter-spacing:-1.021px;">Wed Jun  1 22:59:45 UTC 2022 new message</div>
<div class="t" style="left:677.00px;top:1069.87px;font-size:20px;line-height:20px;color:#5c6773;font-weight:400;font-family:'Liberation Sans', sans-serif;letter-spacing:0.417px;">host</div>
<div class="t" style="left:721.00px;top:1069.87px;font-size:20px;line-height:20px;color:#5c6773;font-weight:400;font-family:'Liberation Sans', sans-serif;">=</div>
<div class="t" style="left:740.25px;top:1069.87px;font-size:20px;line-height:20px;color:#3c444d;font-weight:400;font-family:'Liberation Sans', sans-serif;letter-spacing:0.750px;">unknown</div>
<div class="r" style="left:842px;top:1066.40px;width:2px;height:29.2px;background:repeating-linear-gradient(to bottom,#cdd3db 0,#cdd3db 4.2px,transparent 4.2px,transparent 8.33px);"></div>
<div class="t" style="left:858.50px;top:1069.87px;font-size:20px;line-height:20px;color:#5c6773;font-weight:400;font-family:'Liberation Sans', sans-serif;letter-spacing:0.500px;">source</div>
<div class="t" style="left:925.25px;top:1069.87px;font-size:20px;line-height:20px;color:#5c6773;font-weight:400;font-family:'Liberation Sans', sans-serif;">=</div>
<div class="t" style="left:944.50px;top:1069.87px;font-size:20px;line-height:20px;color:#3c444d;font-weight:400;font-family:'Liberation Sans', sans-serif;letter-spacing:0.650px;">output</div>
<div class="r" style="left:1022px;top:1066.40px;width:2px;height:29.2px;background:repeating-linear-gradient(to bottom,#cdd3db 0,#cdd3db 4.2px,transparent 4.2px,transparent 8.33px);"></div>
<div class="t" style="left:1037.75px;top:1069.87px;font-size:20px;line-height:20px;color:#5c6773;font-weight:400;font-family:'Liberation Sans', sans-serif;letter-spacing:0.472px;">sourcetype</div>
<div class="t" style="left:1144.80px;top:1069.87px;font-size:20px;line-height:20px;color:#5c6773;font-weight:400;font-family:'Liberation Sans', sans-serif;">=</div>
<div class="t" style="left:1164.30px;top:1069.87px;font-size:20px;line-height:20px;color:#3c444d;font-weight:400;font-family:'Liberation Sans', sans-serif;letter-spacing:0.588px;">httpevent</div>
<div class="r" style="left:415.00px;top:1104.60px;width:1185.00px;height:84.80px;background:#f2f4f5;"></div>
<div class="r" style="left:467.00px;top:1104.60px;width:2.00px;height:84.80px;background:#ffffff;"></div>
<svg class="r" style="left:435.5px;top:1120.60px" width="11" height="15" viewBox="0 0 11 15"><path d="M2 1.5L8.5 7.5L2 13.5" fill="none" stroke="#3c444d" stroke-width="1.8"/></svg>
<div class="t" style="left:486.00px;top:1117.92px;font-size:20px;line-height:20px;color:#3c444d;font-weight:400;font-family:'Liberation Sans', sans-serif;letter-spacing:0.060px;">6/1/22</div>
<div class="t" style="left:486.00px;top:1147.57px;font-size:20px;line-height:20px;color:#3c444d;font-weight:400;font-family:'Liberation Sans', sans-serif;letter-spacing:0.232px;">10:59:40.000 PM</div>
<div class="t" style="left:678.00px;top:1120.79px;font-size:19px;line-height:19px;color:#2b3033;font-weight:400;font-family:'Liberation Mono', monospace;letter-spacing:-1.021px;">Wed Jun  1 22:59:40 UTC 2022 new message</div>
<div class="t" style="left:677.00px;top:1154.67px;font-size:20px;line-height:20px;color:#5c6773;font-weight:400;font-family:'Liberation Sans', sans-serif;letter-spacing:0.417px;">host</div>
<div class="t" style="left:721.00px;top:1154.67px;font-size:20px;line-height:20px;color:#5c6773;font-weight:400;font-family:'Liberation Sans', sans-serif;">=</div>
<div class="t" style="left:740.25px;top:1154.67px;font-size:20px;line-height:20px;color:#3c444d;font-weight:400;font-family:'Liberation Sans', sans-serif;letter-spacing:0.750px;">unknown</div>
<div class="r" style="left:842px;top:1151.20px;width:2px;height:29.2px;background:repeating-linear-gradient(to bottom,#cdd3db 0,#cdd3db 4.2px,transparent 4.2px,transparent 8.33px);"></div>
<div class="t" style="left:858.50px;top:1154.67px;font-size:20px;line-height:20px;color:#5c6773;font-weight:400;font-family:'Liberation Sans', sans-serif;letter-spacing:0.500px;">source</div>
<div class="t" style="left:925.25px;top:1154.67px;font-size:20px;line-height:20px;color:#5c6773;font-weight:400;font-family:'Liberation Sans', sans-serif;">=</div>
<div class="t" style="left:944.50px;top:1154.67px;font-size:20px;line-height:20px;color:#3c444d;font-weight:400;font-family:'Liberation Sans', sans-serif;letter-spacing:0.650px;">output</div>
<div class="r" style="left:1022px;top:1151.20px;width:2px;height:29.2px;background:repeating-linear-gradient(to bottom,#cdd3db 0,#cdd3db 4.2px,transparent 4.2px,transparent 8.33px);"></div>
<div class="t" style="left:1037.75px;top:1154.67px;font-size:20px;line-height:20px;color:#5c6773;font-weight:400;font-family:'Liberation Sans', sans-serif;letter-spacing:0.472px;">sourcetype</div>
<div class="t" style="left:1144.80px;top:1154.67px;font-size:20px;line-height:20px;color:#5c6773;font-weight:400;font-family:'Liberation Sans', sans-serif;">=</div>
<div class="t" style="left:1164.30px;top:1154.67px;font-size:20px;line-height:20px;color:#3c444d;font-weight:400;font-family:'Liberation Sans', sans-serif;letter-spacing:0.588px;">httpevent</div>
<svg class="r" style="left:435.5px;top:1205.40px" width="11" height="15" viewBox="0 0 11 15"><path d="M2 1.5L8.5 7.5L2 13.5" fill="none" stroke="#3c444d" stroke-width="1.8"/></svg>
<div class="t" style="left:486.00px;top:1202.72px;font-size:20px;line-height:20px;color:#3c444d;font-weight:400;font-family:'Liberation Sans', sans-serif;letter-spacing:0.060px;">6/1/22</div>
<div class="t" style="left:486.00px;top:1232.37px;font-size:20px;line-height:20px;color:#3c444d;font-weight:400;font-family:'Liberation Sans', sans-serif;letter-spacing:0.232px;">10:59:35.000 PM</div>
<div class="t" style="left:678.00px;top:1205.59px;font-size:19px;line-height:19px;color:#2b3033;font-weight:400;font-family:'Liberation Mono', monospace;letter-spacing:-1.021px;">Wed Jun  1 22:59:35 UTC 2022 new message</div>
<div class="t" style="left:677.00px;top:1239.47px;font-size:20px;line-height:20px;color:#5c6773;font-weight:400;font-family:'Liberation Sans', sans-serif;letter-spacing:0.417px;">host</div>
<div class="t" style="left:721.00px;top:1239.47px;font-size:20px;line-height:20px;color:#5c6773;font-weight:400;font-family:'Liberation Sans', sans-serif;">=</div>
<div class="t" style="left:740.25px;top:1239.47px;font-size:20px;line-height:20px;color:#3c444d;font-weight:400;font-family:'Liberation Sans', sans-serif;letter-spacing:0.750px;">unknown</div>
<div class="r" style="left:842px;top:1236.00px;width:2px;height:29.2px;background:repeating-linear-gradient(to bottom,#cdd3db 0,#cdd3db 4.2px,transparent 4.2px,transparent 8.33px);"></div>
<div class="t" style="left:858.50px;top:1239.47px;font-size:20px;line-height:20px;color:#5c6773;font-weight:400;font-family:'Liberation Sans', sans-serif;letter-spacing:0.500px;">source</div>
<div class="t" style="left:925.25px;top:1239.47px;font-size:20px;line-height:20px;color:#5c6773;font-weight:400;font-family:'Liberation Sans', sans-serif;">=</div>
<div class="t" style="left:944.50px;top:1239.47px;font-size:20px;line-height:20px;color:#3c444d;font-weight:400;font-family:'Liberation Sans', sans-serif;letter-spacing:0.650px;">output</div>
<div class="r" style="left:1022px;top:1236.00px;width:2px;height:29.2px;background:repeating-linear-gradient(to bottom,#cdd3db 0,#cdd3db 4.2px,transparent 4.2px,transparent 8.33px);"></div>
<div class="t" style="left:1037.75px;top:1239.47px;font-size:20px;line-height:20px;color:#5c6773;font-weight:400;font-family:'Liberation Sans', sans-serif;letter-spacing:0.472px;">sourcetype</div>
<div class="t" style="left:1144.80px;top:1239.47px;font-size:20px;line-height:20px;color:#5c6773;font-weight:400;font-family:'Liberation Sans', sans-serif;">=</div>
<div class="t" style="left:1164.30px;top:1239.47px;font-size:20px;line-height:20px;color:#3c444d;font-weight:400;font-family:'Liberation Sans', sans-serif;letter-spacing:0.588px;">httpevent</div>
</div>
</body></html>
